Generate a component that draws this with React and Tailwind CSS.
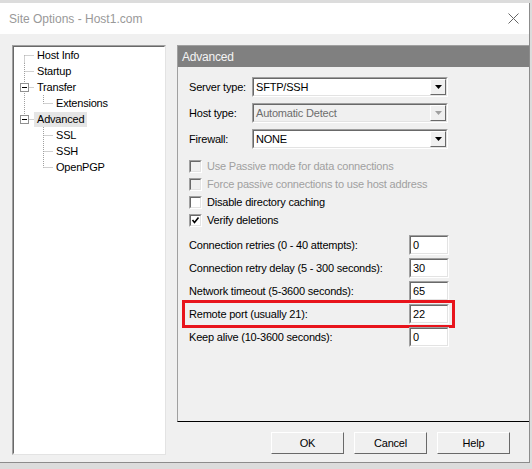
import React from "react";

const Dots = "#a0a0a0";

// one column of tree connector lines, 19px wide, 16px tall
const TreeCol = ({ kind, box }) => {
  const c = 9.5;
  const m = 8.5;
  let v = null;
  if (kind === "pipe" || kind === "tee") v = [0, 16];
  if (kind === "elbow") v = [0, m];
  if (kind === "first") v = [m, 16];
  const h = kind !== "pipe" && kind !== "none";
  return (
    <svg width="19" height="16" className="shrink-0 block">
      {v && (
        <line x1={c} y1={v[0]} x2={c} y2={v[1]} stroke={Dots} strokeDasharray="1 1" />
      )}
      {h && <line x1={c} y1={m} x2="19" y2={m} stroke={Dots} strokeDasharray="1 1" />}
      {box && (
        <g>
          <rect x="5.5" y="4.5" width="8" height="8" fill="white" stroke="#919191" />
          <line x1="7" y1={m} x2="12" y2={m} stroke="#000" />
        </g>
      )}
    </svg>
  );
};

const TreeRow = ({ cols, label, selected }) => (
  <div className="flex items-center h-[16px]">
    {cols.map((c, i) => (
      <TreeCol key={i} kind={c.kind} box={c.box} />
    ))}
    <span className={`px-[3px] leading-[15px] ${selected ? "bg-[#e5e5e5]" : ""}`}>{label}</span>
  </div>
);

const tree = [
  { label: "Host Info", cols: [{ kind: "first" }] },
  { label: "Startup", cols: [{ kind: "tee" }] },
  { label: "Transfer", cols: [{ kind: "tee", box: true }] },
  { label: "Extensions", cols: [{ kind: "pipe" }, { kind: "elbow" }] },
  { label: "Advanced", cols: [{ kind: "elbow", box: true }], selected: true },
  { label: "SSL", cols: [{ kind: "none" }, { kind: "tee" }] },
  { label: "SSH", cols: [{ kind: "none" }, { kind: "tee" }] },
  { label: "OpenPGP", cols: [{ kind: "none" }, { kind: "elbow" }] },
];

const Sunken = ({ className = "", inner = "bg-white", children }) => (
  <div className={`border border-t-[#a0a0a0] border-l-[#a0a0a0] border-r-white border-b-white ${className}`}>
    <div className={`h-full border border-t-[#696969] border-l-[#696969] border-r-[#e3e3e3] border-b-[#e3e3e3] ${inner}`}>
      {children}
    </div>
  </div>
);

const Select = ({ value, disabled }) => (
  <Sunken className="w-[196px] h-[20px]" inner={disabled ? "bg-[#f0f0f0] flex" : "bg-white flex"}>
    <span className={`flex-1 pl-[2px] leading-[16px] ${disabled ? "text-[#6d6d6d]" : ""}`}>{value}</span>
    <div className="w-[16px] h-full bg-[#f0f0f0] border border-t-white border-l-white border-r-[#696969] border-b-[#696969] flex items-center justify-center">
      <svg width="7" height="4">
        <path d="M0 0H7L3.5 4Z" fill={disabled ? "#a0a0a0" : "#000"} />
      </svg>
    </div>
  </Sunken>
);

const Check = ({ label, checked, disabled }) => (
  <div className="flex items-center h-[18px]">
    <Sunken className="w-[13px] h-[13px]" inner={disabled ? "bg-[#f0f0f0]" : "bg-white"}>
      {checked && (
        <svg width="9" height="9" className="block">
          <path d="M1.5 4L3.5 6.5L7.5 1.5" fill="none" stroke="#000" strokeWidth="1.6" />
        </svg>
      )}
    </Sunken>
    <span className={`ml-[5px] ${disabled ? "text-[#a0a0a0]" : ""}`}>{label}</span>
  </div>
);

const Field = ({ label, value, mark }) => (
  <div className="relative flex items-center h-[20px]">
    <span className="w-[220px]">{label}</span>
    <Sunken className="w-[40px] h-[20px]">
      <span className="pl-[2px] leading-[16px]">{value}</span>
    </Sunken>
    {mark && (
      <div className="absolute -left-[7px] -top-[4px] w-[273px] h-[28px] border-[3px] border-[#e8141c]" />
    )}
  </div>
);

const Button = ({ children }) => (
  <div className="w-[73px] h-[22px] bg-[#f0f0f0] border border-t-white border-l-white border-r-[#696969] border-b-[#696969] flex items-center justify-center">
    {children}
  </div>
);

export default function App() {
  return (
    <div className="w-[532px] h-[469px] bg-[#dcdcdc] pt-[3px] overflow-hidden font-['Liberation_Sans',Arial,sans-serif] text-[11px] tracking-[-0.2px] text-black">
      <div className="w-[530px] h-[460px] bg-[#f0f0f0] border-r border-b border-[#8c8c8c] flex flex-col">
        <div className="h-[31px] bg-white flex items-center justify-between pl-[9px] pr-[10px] shrink-0">
          <span className="text-[12px] tracking-normal text-[#999999] font-['Liberation_Sans',sans-serif]">Site Options - Host1.com</span>
          <svg width="11" height="11">
            <path d="M0.5 0.5L10.5 10.5M10.5 0.5L0.5 10.5" stroke="#666" strokeWidth="1" />
          </svg>
        </div>
        <div className="flex pl-[12px] pt-[11px] flex-1">
          <div className="w-[154px] h-[410px] bg-white border border-t-[#a0a0a0] border-l-[#a0a0a0] border-r-[#e3e3e3] border-b-[#e3e3e3] shrink-0">
            <div className="h-full border border-t-[#696969] border-l-[#696969] border-r-white border-b-white pl-px">
              {tree.map((r) => (
                <TreeRow key={r.label} {...r} />
              ))}
            </div>
          </div>
          <div className="ml-[11px] flex-1 flex flex-col">
            <div className="h-[377px] border-l border-t border-l-[#a0a0a0] border-t-[#a0a0a0] border-b border-b-black">
              <div className="h-[21px] bg-[#808080] text-[#f4f4f4] text-[12px] flex items-center pl-[4px]">
                Advanced
              </div>
              <div className="pl-[11px] pt-[10px]">
                <div className="flex flex-col gap-[6px]">
                  <div className="flex items-center">
                    <span className="w-[63px]">Server type:</span>
                    <Select value="SFTP/SSH" />
                  </div>
                  <div className="flex items-center">
                    <span className="w-[63px]">Host type:</span>
                    <Select value="Automatic Detect" disabled />
                  </div>
                  <div className="flex items-center">
                    <span className="w-[63px]">Firewall:</span>
                    <Select value="NONE" />
                  </div>
                </div>
                <div className="mt-[8px] flex flex-col">
                  <Check label="Use Passive mode for data connections" disabled />
                  <Check label="Force passive connections to use host address" disabled />
                  <Check label="Disable directory caching" />
                  <Check label="Verify deletions" checked />
                </div>
                <div className="mt-[6px] flex flex-col gap-[3px]">
                  <Field label="Connection retries (0 - 40 attempts):" value="0" />
                  <Field label="Connection retry delay (5 - 300 seconds):" value="30" />
                  <Field label="Network timeout (5-3600 seconds):" value="65" />
                  <Field label="Remote port (usually 21):" value="22" mark />
                  <Field label="Keep alive (10-3600 seconds):" value="0" />
                </div>
              </div>
            </div>
            <div className="mt-[10px] flex justify-end gap-[10px] pr-[19px]">
              <Button>OK</Button>
              <Button>Cancel</Button>
              <Button>Help</Button>
            </div>
          </div>
        </div>
      </div>
    </div>
  );
}
